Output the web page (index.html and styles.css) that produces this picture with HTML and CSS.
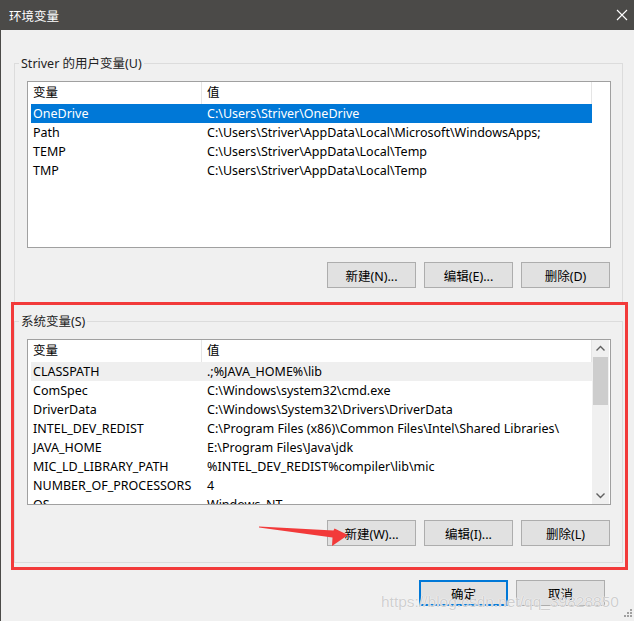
FILE: index.html
```html
<!DOCTYPE html>
<html lang="zh-CN">
<head>
    <meta charset="UTF-8">
    <title>环境变量</title>
    <link rel="stylesheet" href="styles.css">
</head>
<body>
    <div class="window">
        <div class="titlebar">
            <span class="title">环境变量</span>
            <svg class="close" width="12" height="12" viewBox="0 0 12 12">
                <path d="M1 1 L11 11 M11 1 L1 11" stroke="#fff" stroke-width="1.1" fill="none"/>
            </svg>
        </div>

        <div class="content">
            <!-- 用户变量 -->
            <fieldset class="group">
                <legend>Striver 的用户变量(U)</legend>
                <div class="group-body">
                    <div class="list list-user">
                        <div class="list-main">
                            <div class="list-head">
                                <div class="col-name">变量</div>
                                <div class="col-value">值</div>
                            </div>
                            <div class="row selected"><span>OneDrive</span><span>C:\Users\Striver\OneDrive</span></div>
                            <div class="row"><span>Path</span><span>C:\Users\Striver\AppData\Local\Microsoft\WindowsApps;</span></div>
                            <div class="row"><span>TEMP</span><span>C:\Users\Striver\AppData\Local\Temp</span></div>
                            <div class="row"><span>TMP</span><span>C:\Users\Striver\AppData\Local\Temp</span></div>
                        </div>
                    </div>
                    <div class="buttons">
                        <button>新建(N)...</button>
                        <button>编辑(E)...</button>
                        <button>删除(D)</button>
                    </div>
                </div>
            </fieldset>

            <!-- 系统变量 -->
            <fieldset class="group group-system">
                <legend>系统变量(S)</legend>
                <div class="group-body">
                    <div class="list list-system">
                        <div class="list-main">
                            <div class="list-head">
                                <div class="col-name">变量</div>
                                <div class="col-value">值</div>
                            </div>
                            <div class="row inactive"><span>CLASSPATH</span><span>.;%JAVA_HOME%\lib</span></div>
                            <div class="row"><span>ComSpec</span><span>C:\Windows\system32\cmd.exe</span></div>
                            <div class="row"><span>DriverData</span><span>C:\Windows\System32\Drivers\DriverData</span></div>
                            <div class="row"><span>INTEL_DEV_REDIST</span><span>C:\Program Files (x86)\Common Files\Intel\Shared Libraries\</span></div>
                            <div class="row"><span>JAVA_HOME</span><span>E:\Program Files\Java\jdk</span></div>
                            <div class="row"><span>MIC_LD_LIBRARY_PATH</span><span>%INTEL_DEV_REDIST%compiler\lib\mic</span></div>
                            <div class="row"><span>NUMBER_OF_PROCESSORS</span><span>4</span></div>
                            <div class="row"><span>OS</span><span>Windows_NT</span></div>
                        </div>
                        <div class="scrollbar">
                            <svg class="arrow" width="17" height="17" viewBox="0 0 17 17">
                                <path d="M4.5 10.5 L8.5 6.5 L12.5 10.5" stroke="#606060" stroke-width="1.4" fill="none"/>
                            </svg>
                            <div class="thumb"></div>
                            <div class="track"></div>
                            <svg class="arrow" width="17" height="17" viewBox="0 0 17 17">
                                <path d="M4.5 6.5 L8.5 10.5 L12.5 6.5" stroke="#606060" stroke-width="1.4" fill="none"/>
                            </svg>
                        </div>
                    </div>
                    <div class="buttons">
                        <button>新建(W)...</button>
                        <button>编辑(I)...</button>
                        <button>删除(L)</button>
                    </div>
                </div>
            </fieldset>

            <div class="dialog-buttons">
                <button class="default">确定</button>
                <button>取消</button>
            </div>
        </div>

        <!-- 标注 -->
        <div class="mark-box"></div>
        <svg class="mark-arrow" width="634" height="621" viewBox="0 0 634 621">
            <polygon points="259,526.5 333.5,530.5 334.5,528.5 348,535 332,546 332.5,537.5 259,527.5" fill="#f23a3a"/>
        </svg>
        <div class="watermark">https://blog.csdn.net/qq_39828850</div>
        <svg class="grip" width="12" height="12" viewBox="0 0 12 12">
            <rect x="9" y="1" width="2" height="2" fill="#a0a0a0"/>
            <rect x="6" y="4" width="2" height="2" fill="#a0a0a0"/>
            <rect x="9" y="4" width="2" height="2" fill="#a0a0a0"/>
            <rect x="3" y="7" width="2" height="2" fill="#a0a0a0"/>
            <rect x="6" y="7" width="2" height="2" fill="#a0a0a0"/>
            <rect x="9" y="7" width="2" height="2" fill="#a0a0a0"/>
        </svg>
    </div>
</body>
</html>
```

FILE: styles.css
```css
* {
    margin: 0;
    padding: 0;
    box-sizing: border-box;
}

body {
    width: 634px;
    height: 621px;
    overflow: hidden;
    background-color: #f0f0f0;
    font-family: 'Noto Sans', 'Noto Sans CJK SC', sans-serif;
    font-size: 12.5px;
    color: #000;
}

.window {
    position: relative;
    height: 621px;
    border-left: 1px solid #4b4a48;
}

.titlebar {
    height: 30px;
    background-color: #4b4a48; /* 深灰标题栏 */
    color: #fff;
    display: flex;
    align-items: center;
    justify-content: space-between;
    padding: 0 6px 0 8px;
}

.title {
    font-size: 12.5px;
}

.content {
    padding: 25px 11px 0 13px;
}

.group {
    border: 1px solid #dcdcdc;
    min-width: 0;
}

.group legend {
    margin-left: 4px;
    padding: 0 2px;
    line-height: 17px;
    color: #222;
}

.group-system {
    margin-top: 8px;
}

.group-body {
    padding: 9px 11px 16px 12px;
}

.list {
    display: flex;
    height: 167px;
    background-color: #fff;
    border: 1px solid #a0a0a0;
    overflow: hidden;
}

.list-system {
    height: 166px;
}

.list-main {
    width: 564px;
    overflow: hidden;
}

.list-head {
    display: flex;
    height: 22px;
    line-height: 22px;
}

.col-name {
    width: 174px;
    padding-left: 5px;
    border-right: 1px solid #e5e5e5;
}

.col-value {
    flex: 1;
    padding-left: 5px;
    border-right: 1px solid #e5e5e5;
}

.row {
    display: grid;
    grid-template-columns: 174px 1fr;
    height: 19px;
    line-height: 19px;
    margin-left: 3px;
    padding-left: 2px;
    white-space: nowrap;
    overflow: hidden;
}

.row.selected {
    background-color: #0078d7; /* 选中行 */
    color: #fff;
}

.row.inactive {
    background-color: #efefef;
}

.scrollbar {
    width: 17px;
    display: flex;
    flex-direction: column;
    background-color: #f0f0f0;
}

.arrow {
    display: block;
    flex: none;
}

.thumb {
    height: 48px;
    margin: 0 1px;
    background-color: #cdcdcd;
}

.track {
    flex: 1;
}

.buttons {
    display: flex;
    justify-content: flex-end;
    gap: 8px;
    margin-top: 14px;
    padding-right: 1px;
}

button {
    width: 89px;
    height: 26px;
    background-color: #e1e1e1;
    border: 1px solid #adadad;
    font-family: inherit;
    font-size: 12.5px;
    color: #000;
}

.group-system .buttons {
    margin-top: 15px;
}

.dialog-buttons {
    display: flex;
    justify-content: flex-end;
    gap: 8px;
    margin-top: 17px;
    padding-right: 18px;
}

button.default {
    border-color: #0078d7;
    box-shadow: inset 0 0 0 1px #0078d7;
}

/* 红色标注框 */
.mark-box {
    position: absolute;
    left: 10px;
    top: 302px;
    width: 617px;
    height: 268px;
    border: 3px solid #f23a3a;
}

.mark-arrow {
    position: absolute;
    left: -1px;
    top: 0;
    pointer-events: none;
}

.watermark {
    position: absolute;
    left: 380px;
    top: 593px;
    font-family: 'Liberation Sans', Arial, sans-serif;
    font-size: 15.5px;
    color: #cfcfcf;
    text-shadow: 0 0 1px #fff, 0 0 1px #fff;
    white-space: nowrap;
}

.grip {
    position: absolute;
    right: 1px;
    bottom: 1px;
}
```
